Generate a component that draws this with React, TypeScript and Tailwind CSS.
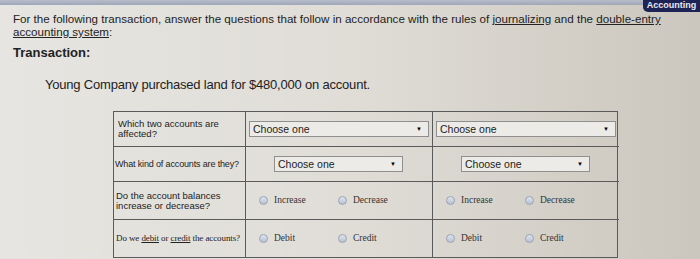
const Select = ({ wide }: { wide?: boolean }) => (
  <div
    className={`flex h-[16px] items-center justify-between border border-[#8f8f8f] bg-[#ecebe7] pl-[3px] pr-[6px] ${
      wide ? "w-full" : "ml-[28px] w-[129px]"
    }`}
  >
    <span className="text-[10.5px] leading-none text-[#222]">Choose one</span>
    <span className="text-[6px] leading-none text-black">▼</span>
  </div>
);

const Radio = ({ label }: { label: string }) => (
  <div className="flex w-[79px] items-center gap-[6px]">
    <span className="h-[9px] w-[9px] rounded-full border border-[#9aa3b5] bg-gradient-to-b from-[#dfe4ee] to-[#b8c1d3]" />
    <span className="font-['Liberation_Serif',serif] text-[9.5px] text-[#333]">
      {label}
    </span>
  </div>
);

const Cell = ({
  children,
  className = "",
}: {
  children: React.ReactNode;
  className?: string;
}) => (
  <div className={`flex items-center border-[#5a5a5a] ${className}`}>
    {children}
  </div>
);

export default function App() {
  return (
    <div className="h-[259px] w-[700px] overflow-hidden bg-gradient-to-r from-[#e6e5e1] via-[#e0ddd7] to-[#cbc7be] font-['Liberation_Sans',Arial,sans-serif]">
      <div className="flex h-[5px] items-start justify-end bg-gradient-to-b from-[#b7bdca] to-[#9ea6b8]">
        <div className="flex h-[12px] w-[57px] items-center justify-center rounded-bl-[5px] bg-[#1d2455] text-[9px] font-bold text-[#e8eaf2]">
          Accounting
        </div>
      </div>

      <p className="mt-[7px] w-[690px] pl-[13px] text-[11.6px] leading-[13px] text-[#222]">
        For the following transaction, answer the questions that follow in
        accordance with the rules of <span className="underline">journalizing</span>{" "}
        and the <span className="underline">double-entry</span>{" "}
        <span className="underline">accounting system</span>:
      </p>

      <p className="mt-[5px] pl-[13px] text-[13px] font-bold text-[#222]">
        Transaction:
      </p>

      <p className="mt-[12px] pl-[45px] text-[13px] tracking-[-0.2px] text-[#222]">
        Young Company purchased land for $480,000 on account.
      </p>

      <div className="ml-[113px] mt-[17px] grid w-[505px] grid-cols-[132px_187px_186px] grid-rows-[35px_35px_38px_37px] border border-[#5a5a5a] text-[#222]">
        <Cell className="border-r border-b px-[4px]">
          <span className="text-[9.5px] leading-[10px]">
            Which two accounts are
            <br />
            affected?
          </span>
        </Cell>
        <Cell className="border-r border-b px-[3px]">
          <Select wide />
        </Cell>
        <Cell className="border-b px-[3px]">
          <Select wide />
        </Cell>

        <Cell className="border-r border-b px-[1px]">
          <span className="whitespace-nowrap text-[9px] leading-[10px] tracking-[-0.15px]">
            What kind of accounts are they?
          </span>
        </Cell>
        <Cell className="border-r border-b">
          <Select />
        </Cell>
        <Cell className="border-b">
          <Select />
        </Cell>

        <Cell className="border-r border-b px-[2px]">
          <span className="text-[9.5px] leading-[10px]">
            Do the account balances
            <br />
            increase or decrease?
          </span>
        </Cell>
        <Cell className="border-r border-b pl-[13px]">
          <Radio label="Increase" />
          <Radio label="Decrease" />
        </Cell>
        <Cell className="border-b pl-[13px]">
          <Radio label="Increase" />
          <Radio label="Decrease" />
        </Cell>

        <Cell className="border-r px-[2px]">
          <span className="whitespace-nowrap font-['Liberation_Serif',serif] text-[9px] tracking-[-0.1px]">
            Do we <span className="underline">debit</span> or{" "}
            <span className="underline">credit</span> the accounts?
          </span>
        </Cell>
        <Cell className="border-r pl-[13px]">
          <Radio label="Debit" />
          <Radio label="Credit" />
        </Cell>
        <Cell className="pl-[13px]">
          <Radio label="Debit" />
          <Radio label="Credit" />
        </Cell>
      </div>
    </div>
  );
}
